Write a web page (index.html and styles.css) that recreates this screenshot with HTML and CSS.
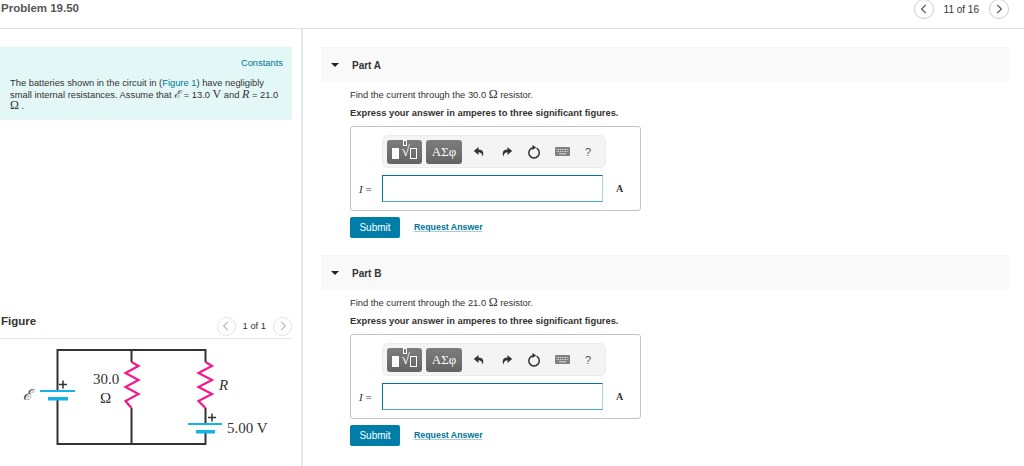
FILE: index.html
```html
<!DOCTYPE html>
<html lang="en">
<head>
    <meta charset="UTF-8">
    <title>Problem 19.50</title>
    <link rel="stylesheet" href="styles.css">
</head>
<body>
    <!-- Shared icons -->
    <svg class="icon-defs" width="0" height="0">
        <symbol id="prev" viewBox="0 0 10 10"><path d="M6.500 1.500 3 5 6.500 8.500" fill="none" stroke="currentColor" stroke-width="1"/></symbol>
        <symbol id="next" viewBox="0 0 10 10"><path d="M3.500 1.500 7 5 3.500 8.500" fill="none" stroke="currentColor" stroke-width="1"/></symbol>
        <symbol id="undo" viewBox="0 0 12 12"><path d="M5.500 1 0.800 5 5.500 9V6.300C7.800 6.300 9 7.300 9.600 10.600 11.400 6.400 9.600 3.600 5.500 3.600Z"/></symbol>
        <symbol id="redo" viewBox="0 0 12 12"><path d="M6.500 1 11.200 5 6.500 9V6.300C4.200 6.300 3 7.300 2.400 10.600 0.600 6.400 2.400 3.600 6.500 3.600Z"/></symbol>
        <symbol id="reset" viewBox="0 0 14 14"><path d="M5.800 2.700A5.200 5.200 0 1 0 9.600 3.200" fill="none" stroke="#333" stroke-width="1.500"/><path d="M5.400 0 9.200 2.500 5.400 5Z" fill="#333"/></symbol>
        <symbol id="keyboard" viewBox="0 0 15 9"><rect width="15" height="9" rx="1" fill="#808080"/><path d="M1.500 2.500h12M1.500 4.500h12" stroke="#ddd" stroke-width="1" stroke-dasharray="1 .7"/><path d="M4 6.800h7" stroke="#ddd" stroke-width="1"/></symbol>
    </svg>

    <header class="top-bar">
        <h1>Problem 19.50</h1>
        <div class="pager">
            <span class="round-btn"><svg class="chevron"><use href="#prev"/></svg></span>
            <span class="pager-text">11 of 16</span>
            <span class="round-btn"><svg class="chevron"><use href="#next"/></svg></span>
        </div>
    </header>

    <div class="page">
        <aside class="left-col">
            <div class="constants">
                <div class="constants-link">Constants</div>
                <p>The batteries shown in the circuit in (<a class="link" href="#">Figure 1</a>) have negligibly small internal resistances. Assume that <i class="math script">&#8496;</i> = 13.0 <span class="math big">V</span> and <i class="math big">R</i> = 21.0 <span class="math big">&Omega;</span> .</p>
            </div>

            <div class="figure-head">
                <h2>Figure</h2>
                <div class="pager faded">
                    <span class="round-btn small"><svg class="chevron"><use href="#prev"/></svg></span>
                    <span class="pager-text">1 of 1</span>
                    <span class="round-btn small"><svg class="chevron"><use href="#next"/></svg></span>
                </div>
            </div>

            <svg class="circuit" width="292" height="127" viewBox="0 339 292 127">
                <g fill="none" stroke="#333" stroke-width="2">
                    <path d="M57.500 390V350H205.500V362M57.500 399V444H205.500V432M131.500 350V362M131.500 408V444M205.500 424V408"/>
                </g>
                <g fill="none" stroke="#f01a8c" stroke-width="2.200">
                    <path d="M131.500 362 138.500 366 125.500 373 138.500 380 125.500 387 138.500 394 125.500 401 131.500 408"/>
                    <path d="M205.500 362 212 366 198.500 373 212 380 198.500 387 212 394 198.500 401 205.500 408"/>
                </g>
                <g fill="#14b4ea">
                    <rect x="40" y="390" width="35" height="2"/>
                    <rect x="48" y="397" width="20" height="3.500"/>
                    <rect x="188" y="423" width="34" height="2"/>
                    <rect x="196" y="430" width="19" height="3.500"/>
                </g>
                <path class="plus" d="M59 384.500h8M63 380.500v8M208 417.500h8M212 413.500v8"/>
                <g class="circuit-text">
                    <text x="93" y="384">30.0</text>
                    <text x="100" y="403">&Omega;</text>
                    <text x="219" y="390" font-style="italic">R</text>
                    <text x="227" y="433">5.00 V</text>
                    <text x="23" y="400" font-style="italic">&#8496;</text>
                </g>
            </svg>
        </aside>

        <main class="right-col">
            <section class="part">
                <div class="part-bar"><span class="caret"></span><h3>Part A</h3></div>
                <div class="part-body">
                    <p class="question">Find the current through the 30.0 <span class="math big">&Omega;</span> resistor.</p>
                    <p class="instruction">Express your answer in amperes to three significant figures.</p>
                    <div class="answer-box">
                        <div class="toolbar">
                            <span class="tool-btn templates"><span class="tpl-block"></span><span class="tpl-root"><span class="tpl-small"></span>&radic;<span class="tpl-box"></span></span></span>
                            <span class="tool-btn greek">&Alpha;&Sigma;&phi;</span>
                            <svg class="tool-icon first"><use href="#undo"/></svg>
                            <svg class="tool-icon"><use href="#redo"/></svg>
                            <svg class="tool-icon reset"><use href="#reset"/></svg>
                            <svg class="tool-icon kb"><use href="#keyboard"/></svg>
                            <span class="tool-help">?</span>
                        </div>
                        <div class="answer-row">
                            <span class="answer-label"><i>I</i> =</span>
                            <input class="answer-input" type="text">
                            <span class="unit">A</span>
                        </div>
                    </div>
                    <div class="actions">
                        <button class="submit">Submit</button>
                        <a class="link request" href="#">Request Answer</a>
                    </div>
                </div>
            </section>

            <section class="part">
                <div class="part-bar"><span class="caret"></span><h3>Part B</h3></div>
                <div class="part-body">
                    <p class="question">Find the current through the 21.0 <span class="math big">&Omega;</span> resistor.</p>
                    <p class="instruction">Express your answer in amperes to three significant figures.</p>
                    <div class="answer-box">
                        <div class="toolbar">
                            <span class="tool-btn templates"><span class="tpl-block"></span><span class="tpl-root"><span class="tpl-small"></span>&radic;<span class="tpl-box"></span></span></span>
                            <span class="tool-btn greek">&Alpha;&Sigma;&phi;</span>
                            <svg class="tool-icon first"><use href="#undo"/></svg>
                            <svg class="tool-icon"><use href="#redo"/></svg>
                            <svg class="tool-icon reset"><use href="#reset"/></svg>
                            <svg class="tool-icon kb"><use href="#keyboard"/></svg>
                            <span class="tool-help">?</span>
                        </div>
                        <div class="answer-row">
                            <span class="answer-label"><i>I</i> =</span>
                            <input class="answer-input" type="text">
                            <span class="unit">A</span>
                        </div>
                    </div>
                    <div class="actions">
                        <button class="submit">Submit</button>
                        <a class="link request" href="#">Request Answer</a>
                    </div>
                </div>
            </section>
        </main>
    </div>
</body>
</html>
```

FILE: styles.css
```css
* {
    margin: 0;
    padding: 0;
    box-sizing: border-box;
}

html, body {
    height: 466px;
    overflow: hidden;
}

body {
    font-family: "Liberation Sans", Arial, sans-serif;
    font-size: 9.35px;
    color: #333;
    background-color: #fff;
}

.icon-defs {
    position: absolute;
}

/* Header */
.top-bar {
    display: flex;
    justify-content: space-between;
    align-items: flex-start;
    height: 29px;
    padding-right: 15px;
    border-bottom: 1px solid #dfe3e6;
}

h1 {
    padding-left: 1px;
    font-size: 11.5px;
    line-height: 16px;
    color: #555;
}

.pager {
    display: flex;
    align-items: center;
    gap: 10px;
    height: 18px;
    color: #333;
    font-size: 10px;
}

.round-btn {
    width: 20px;
    height: 20px;
    flex: none;
    display: flex;
    align-items: center;
    justify-content: center;
    border: 1px solid #ccc;
    border-radius: 50%;
    color: #555;
}

.round-btn.small {
    width: 19px;
    height: 19px;
    border-color: #e3e3e3;
    color: #bbb;
}

.chevron {
    width: 12px;
    height: 12px;
}

/* Page columns */
.page {
    display: flex;
    height: 437px;
}

.left-col {
    width: 303px;
    flex: none;
    padding: 18px 9px 0 0;
    border-right: 2px solid #e4e9ee;
}

.right-col {
    flex: 1;
    padding: 18px 15px 0 18px;
}

/* Constants box */
.constants {
    height: 73px;
    padding: 10px 9px 0 10px;
    background-color: #e3f7f7;
    line-height: 11.5px;
}

.constants-link {
    text-align: right;
    color: #007398;
    line-height: 12px;
    margin-bottom: 9px;
}

.link {
    color: #007398;
    text-decoration: none;
}

.math {
    font-family: "Liberation Serif", serif;
}

.math.big {
    font-size: 12px;
    line-height: 9px;
}

.math.script {
    font-family: "DejaVu Serif", serif;
    font-size: 11px;
    line-height: 9px;
}

/* Figure */
.figure-head {
    display: flex;
    justify-content: space-between;
    align-items: center;
    height: 30px;
    margin-top: 189px;
    border-bottom: 1px solid #e8e8e8;
}

h2 {
    padding-left: 1px;
    font-size: 11.5px;
    color: #333;
    margin-bottom: 5px;
}

.faded {
    gap: 7px;
    margin-top: 5px;
    font-size: 9.35px;
}

.circuit {
    display: block;
}

.plus {
    fill: none;
    stroke: #333;
    stroke-width: 1.500;
}

.circuit-text {
    font-family: "Liberation Serif", serif;
    font-size: 15px;
    fill: #333;
}

/* Parts */
.part {
    height: 208px;
    border-top: 1px solid #f3f3f3;
}

.part-bar {
    display: flex;
    align-items: center;
    height: 34px;
    padding-left: 10px;
    background-color: #f9f9f9;
}

.caret {
    width: 0;
    height: 0;
    border-left: 4px solid transparent;
    border-right: 4px solid transparent;
    border-top: 4px solid #222;
}

h3 {
    font-size: 10px;
    margin-left: 13px;
}

.part-body {
    padding-left: 29px;
}

.question {
    margin-top: 6px;
    line-height: 14px;
}

.instruction {
    margin-top: 4px;
    line-height: 14px;
    font-weight: bold;
}

.answer-box {
    width: 291px;
    height: 85px;
    margin-top: 6px;
    padding: 8px 0 0 31px;
    border: 1px solid #c4c4c4;
    border-radius: 3px;
}

/* Equation toolbar */
.toolbar {
    display: flex;
    align-items: center;
    width: 224px;
    height: 33px;
    padding-left: 4px;
    background-color: #f4f4f4;
    border: 1px solid #ececec;
    border-radius: 6px;
}

.tool-btn {
    height: 24px;
    display: flex;
    align-items: center;
    justify-content: center;
    border-radius: 3px;
    background: linear-gradient(#7d7d7d, #646464);
    color: #fff;
}

.templates {
    width: 35px;
    gap: 2px;
}

.tpl-block {
    width: 7px;
    height: 11px;
    margin-top: 4px;
    background-color: #fff;
}

.tpl-root {
    position: relative;
    display: flex;
    align-items: flex-end;
    font-family: "Liberation Serif", serif;
    font-size: 15px;
    line-height: 17px;
}

.tpl-small {
    position: absolute;
    left: 2px;
    top: -3px;
    width: 4px;
    height: 6px;
    border: 1px solid #fff;
}

.tpl-box {
    width: 7px;
    height: 11px;
    border: 1px solid #fff;
    margin-bottom: 1px;
}

.greek {
    width: 36px;
    margin-left: 4px;
    font-family: "Liberation Serif", serif;
    font-size: 13px;
}

.tool-icon {
    width: 12px;
    height: 12px;
    margin-left: 16px;
    fill: #333;
}

.tool-icon.first {
    margin-left: 11px;
}

.tool-icon.reset {
    width: 14px;
    height: 14px;
    margin-left: 14px;
}

.tool-icon.kb {
    width: 15px;
    height: 9px;
    margin-left: 14px;
}

.tool-help {
    margin-left: 15px;
    font-size: 11px;
    color: #555;
}

.answer-row {
    display: flex;
    align-items: center;
    margin: 7px 0 0 -23px;
}

.answer-label {
    width: 23px;
    font-family: "Liberation Serif", serif;
    font-size: 11px;
}

.answer-input {
    width: 221px;
    height: 27px;
    border: 1px solid #007398;
    border-right-color: #a9d6e2;
    border-bottom-color: #4aa6c4;
    background-color: #fff;
    outline: none;
}

.unit {
    margin-left: 13px;
    font-family: "Liberation Serif", serif;
    font-size: 10px;
    font-weight: bold;
}

.actions {
    display: flex;
    align-items: center;
    margin-top: 6px;
}

.submit {
    width: 50px;
    height: 21px;
    border: none;
    border-radius: 2px;
    background-color: #007ea8;
    color: #fff;
    font-family: inherit;
    font-size: 10px;
}

.request {
    margin: 0 0 2px 14px;
    font-size: 8.8px;
    font-weight: bold;
    text-decoration: underline;
    text-decoration-color: #9fd0e0;
}
```
